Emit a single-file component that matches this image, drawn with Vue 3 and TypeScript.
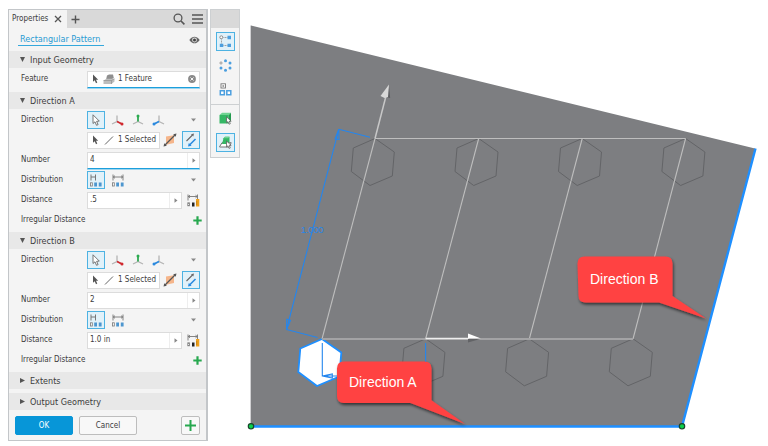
<script setup lang="ts">
import { reactive } from 'vue'

interface Direction {
  id: string
  title: string
  open: boolean
  count: string
  distance: string
  active: boolean
}

const directions = reactive<Direction[]>([
  { id: 'a', title: 'Direction A', open: true, count: '4', distance: '.5', active: true },
  { id: 'b', title: 'Direction B', open: true, count: '2', distance: '1.0 in', active: false },
])

const input = reactive({ open: true })

const closed = reactive([
  { title: 'Extents', open: false },
  { title: 'Output Geometry', open: false },
])

const axes = [
  { name: 'X axis', color: '#d0282e', x: 12, y: 10 },
  { name: 'Y axis', color: '#2bab50', x: 7, y: 1 },
  { name: 'Z axis', color: '#2a8ae0', x: 2, y: 10 },
]

const hexPoints = '0,0 19.3,13.5 17.3,37.5 -5,47 -23.7,33 -21.7,9.5'
const topColumns = [375, 478.7, 582.2, 685.6]
const bottomColumns = [322, 425.6, 529.3, 633]
</script>

<template>
  <main class="app">
    <form class="panel" @submit.prevent>
      <header class="tabs">
        <div class="tab">
          <span>Properties</span>
          <button type="button" class="plain" aria-label="Close">
            <svg width="8" height="8" viewBox="0 0 8 8"><path d="M1 1l6 6M7 1l-6 6" stroke="#555" stroke-width="1.3" /></svg>
          </button>
        </div>
        <button type="button" class="plain add-tab" aria-label="Add tab">
          <svg width="9" height="9" viewBox="0 0 9 9"><path d="M4.500 .5v8M.5 4.500h8" stroke="#555" stroke-width="1.4" /></svg>
        </button>
        <button type="button" class="plain search" aria-label="Search">
          <svg width="12" height="12" viewBox="0 0 12 12" fill="none" stroke="#555"><circle cx="5" cy="5" r="3.900" stroke-width="1.300" /><path d="M8 8l3.400 3.400" stroke-width="1.600" /></svg>
        </button>
        <button type="button" class="plain" aria-label="Menu">
          <svg width="11" height="10" viewBox="0 0 11 10"><path d="M0 1h11M0 5h11M0 9h11" stroke="#555" stroke-width="1.300" /></svg>
        </button>
      </header>

      <div class="title-row">
        <a href="#" class="title">Rectangular Pattern</a>
        <button type="button" class="plain" aria-label="Preview">
          <svg width="11" height="8" viewBox="0 0 11 8"><path d="M.3 4C2 1.500 3.700.7 5.500.7S9 1.500 10.700 4C9 6.500 7.300 7.300 5.500 7.300S2 6.500.3 4z" fill="#666" /><circle cx="5.500" cy="4" r="2.400" fill="#ddd" /><circle cx="5.500" cy="4" r="1.500" fill="#444" /></svg>
        </button>
      </div>

      <button type="button" class="section" :aria-expanded="input.open" @click="input.open = !input.open">
        <svg width="7" height="7" viewBox="0 0 7 7" :class="{ shut: !input.open }"><path d="M1 1h5L3.500 6z" fill="#555" /></svg>
        Input Geometry
      </button>
      <div v-if="input.open" class="body first">
        <div class="row">
          <span class="label">Feature</span>
          <div class="picker active">
            <svg width="7" height="10" viewBox="0 0 7 10"><path d="M1 .5v7.200l1.700-1.500 1.300 3 1.300-.6-1.300-2.800h2.200z" fill="#555" /></svg>
            <svg class="wide" width="12" height="11" viewBox="0 0 12 11"><path d="M4 1.500L6 .5h4l.8 3.500-1.800 1H3.200z" fill="#8e8e8e" /><path d="M.5 6.500l3-1.700h8v2.700L8.500 10h-8z" fill="#bdbdbd" /><path d="M.5 6.500h8V10M8.500 6.500l3-1.700" fill="none" stroke="#8a8a8a" stroke-width=".6" /></svg>
            <span>1 Feature</span>
            <button type="button" class="plain clear" aria-label="Clear feature">
              <svg width="8" height="8" viewBox="0 0 8 8"><circle cx="4" cy="4" r="3.900" fill="#8a8a8a" /><path d="M2.500 2.500l3 3M5.500 2.500l-3 3" stroke="#fff" stroke-width=".9" /></svg>
            </button>
          </div>
        </div>
      </div>

      <template v-for="d in directions" :key="d.id">
        <button type="button" class="section" :aria-expanded="d.open" @click="d.open = !d.open">
          <svg width="7" height="7" viewBox="0 0 7 7" :class="{ shut: !d.open }"><path d="M1 1h5L3.500 6z" fill="#555" /></svg>
          {{ d.title }}
        </button>
        <div v-if="d.open" class="body">
          <div class="row">
            <span class="label">Direction</span>
            <div class="tools">
              <button type="button" class="tool on" aria-label="Select">
                <svg width="8" height="12" viewBox="0 0 8 12"><path d="M1 .8v8.700l2-1.700 1.500 3.500 1.600-.7-1.500-3.300 2.700-.2z" fill="#fff" stroke="#666" stroke-width=".9" /></svg>
              </button>
              <button v-for="axis in axes" :key="axis.name" type="button" class="tool" :aria-label="axis.name">
                <svg width="14" height="12" viewBox="0 0 14 12">
                  <path d="M7 7.500V1.500M7 7.500l-5 2.500M7 7.500l5 2.500" stroke="#b4b4b4" stroke-width="1.300" />
                  <path :d="`M7 7.500L${axis.x} ${axis.y}`" :stroke="axis.color" stroke-width="1.700" />
                  <circle :cx="axis.x" :cy="axis.y + (axis.y < 5 ? 1 : 0)" r="1.500" :fill="axis.color" />
                </svg>
              </button>
              <button type="button" class="plain drop" aria-label="More directions">
                <svg width="5" height="4" viewBox="0 0 5 4"><path d="M0 .5h5L2.500 3.500z" fill="#888" /></svg>
              </button>
            </div>
          </div>
          <div class="row">
            <div class="tools shifted">
              <div class="picker short">
                <svg width="7" height="10" viewBox="0 0 7 10"><path d="M1 .5v7.200l1.700-1.500 1.300 3 1.300-.6-1.300-2.800h2.200z" fill="#555" /></svg>
                <svg class="wide" width="12" height="11" viewBox="0 0 12 11"><path d="M2 9.500L10 1.500" stroke="#666" /></svg>
                <span>1 Selected</span>
              </div>
              <button type="button" class="tool" aria-label="Midplane">
                <svg width="14" height="14" viewBox="0 0 14 14"><path d="M3 3.500l8-1.200v7.700l-8 1.800z" fill="#f5b58a" /><path d="M2 12L12 2" stroke="#555" stroke-width="1.200" /><path d="M.5 13.500l.8-3.300 2.500 2.500zM13.500.5l-.8 3.300-2.500-2.500z" fill="#555" /></svg>
              </button>
              <button type="button" class="tool on end" aria-label="Flip direction">
                <svg width="12" height="14" viewBox="0 0 12 14"><path d="M1.500 8L7.500 2" stroke="#666" stroke-width="1.100" /><path d="M9 .5L8.300 3.500 6 1.200z" fill="#666" /><path d="M4.500 12L10.500 6" stroke="#2a8ae0" stroke-width="1.600" /><path d="M3 13.500l.8-3.600 2.800 2.800z" fill="#2a8ae0" /></svg>
              </button>
            </div>
          </div>
          <div class="row">
            <label class="label" :for="`number-${d.id}`">Number</label>
            <div class="field" :class="{ active: d.active }">
              <input :id="`number-${d.id}`" v-model="d.count" type="text" />
              <button type="button" class="more" aria-label="Number options">
                <svg width="4" height="5" viewBox="0 0 4 5"><path d="M.5 .3L3.500 2.500.5 4.700z" fill="#888" /></svg>
              </button>
            </div>
          </div>
          <div class="row">
            <span class="label">Distribution</span>
            <div class="tools">
              <button type="button" class="tool on" aria-label="Incremental">
                <svg width="12" height="13" viewBox="0 0 12 13"><path d="M1 .5v6M5.500 .5v6M1 3h4.500" fill="none" stroke="#777" stroke-width="1" /><rect x=".5" y="8.800" width="1.800" height="3.200" fill="#fff" stroke="#777" stroke-width=".8" /><path d="M4.200 8.500h2.800v4h-2.800zM8.800 8.500h2.800v4h-2.800z" fill="#4d96cf" /></svg>
              </button>
              <button type="button" class="tool gap" aria-label="Fitted">
                <svg width="12" height="13" viewBox="0 0 12 13"><path d="M1 .5v6M11 .5v6M1 3h10M3 1.700L1.300 3 3 4.300M9 1.700L10.700 3 9 4.300" fill="none" stroke="#777" stroke-width=".9" /><rect x=".5" y="8.800" width="1.800" height="3.200" fill="#fff" stroke="#777" stroke-width=".8" /><path d="M4.200 8.500h2.800v4h-2.800zM8.800 8.500h2.800v4h-2.800z" fill="#4d96cf" /></svg>
              </button>
              <button type="button" class="plain drop" aria-label="More distributions">
                <svg width="5" height="4" viewBox="0 0 5 4"><path d="M0 .5h5L2.500 3.500z" fill="#888" /></svg>
              </button>
            </div>
          </div>
          <div class="row">
            <label class="label" :for="`distance-${d.id}`">Distance</label>
            <div class="tools">
              <div class="field">
                <input :id="`distance-${d.id}`" v-model="d.distance" type="text" />
                <button type="button" class="more" aria-label="Distance options">
                  <svg width="4" height="5" viewBox="0 0 4 5"><path d="M.5 .3L3.500 2.500.5 4.700z" fill="#888" /></svg>
                </button>
              </div>
              <button type="button" class="tool measure" aria-label="Measure">
                <svg width="13" height="13" viewBox="0 0 13 13"><path d="M1 .5v6M10.500 .5v6M1 2.500h9.500M3 1.200L1.300 2.500 3 3.800M8.500 1.200l1.700 1.300-1.700 1.300" fill="none" stroke="#777" stroke-width=".9" /><rect x=".8" y="8.800" width="1.700" height="3" fill="#fff" stroke="#777" stroke-width=".8" /><path d="M5 8.500h2.500v4H5z" fill="#222" /><path d="M9 5h3.300v7.500H9z" fill="#f0a21c" /><path d="M9 8h1.300M9 10h1.300" stroke="#805010" stroke-width=".6" /></svg>
              </button>
            </div>
          </div>
          <div class="row irregular">
            <span>Irregular Distance</span>
            <button type="button" class="plain" aria-label="Add irregular distance">
              <svg width="9" height="9" viewBox="0 0 9 9"><path d="M4.500 .3v8.400M.3 4.500h8.400" stroke="#27a84f" stroke-width="2.200" /></svg>
            </button>
          </div>
        </div>
      </template>

      <button v-for="s in closed" :key="s.title" type="button" class="section spaced" :aria-expanded="s.open" @click="s.open = !s.open">
        <svg width="7" height="7" viewBox="0 0 7 7" :class="{ shut: !s.open }"><path d="M1 1h5L3.500 6z" fill="#555" /></svg>
        {{ s.title }}
      </button>

      <footer class="actions">
        <button type="submit" class="action ok">OK</button>
        <button type="button" class="action">Cancel</button>
        <button type="button" class="action apply" aria-label="Apply and create new">
          <svg width="11" height="11" viewBox="0 0 11 11"><path d="M5.500 0v11M0 5.500h11" stroke="#27a84f" stroke-width="2" /></svg>
        </button>
      </footer>
    </form>

    <nav class="strip" aria-label="Pattern type">
      <div class="strip-head"></div>
      <div class="strip-group">
        <button type="button" class="kind on" aria-label="Rectangular pattern">
          <svg width="13" height="13" viewBox="0 0 13 13"><path d="M2.500 2.500h8M2.500 2.500v8M2.500 10.500h8" stroke="#999" stroke-width=".9" stroke-dasharray="2 1" fill="none" /><circle cx="2.300" cy="2.300" r="1.500" fill="#fff" stroke="#777" stroke-width=".8" /><path d="M8.500 .8h3.500v3.400H8.500zM.8 8.700h3.500v3.400H.8zM8.500 8.700h3.500v3.400H8.500z" fill="#4c9fdf" /></svg>
        </button>
        <button type="button" class="kind" aria-label="Circular pattern">
          <svg width="13" height="13" viewBox="0 0 13 13"><circle cx="2" cy="4" r="1.100" fill="#fff" stroke="#777" stroke-width=".7" /><g fill="#4c9fdf"><circle cx="6.500" cy="1.700" r="1.500" /><circle cx="11" cy="4" r="1.500" /><circle cx="11" cy="9" r="1.500" /><circle cx="6.500" cy="11.300" r="1.500" /><circle cx="2" cy="9" r="1.500" /></g></svg>
        </button>
        <button type="button" class="kind" aria-label="Sketch driven pattern">
          <svg width="13" height="13" viewBox="0 0 13 13" fill="#fff"><rect x="2" y=".8" width="4.500" height="4.200" stroke="#777" stroke-width=".9" /><path d="M4.250 2v2M3.200 3h2.100" stroke="#777" stroke-width=".7" /><path d="M1.300 7.700h4v4h-4zM7.800 7.700h4v4h-4z" stroke="#4c9fdf" stroke-width="1.500" /></svg>
        </button>
      </div>
      <div class="strip-group split">
        <button type="button" class="kind" aria-label="Pattern a solid">
          <svg width="13" height="13" viewBox="0 0 13 13"><path d="M.5 3l2.500-2.300h9L9.800 3z" fill="#6fd492" /><path d="M.5 3h9.300v8.500H.5z" fill="#35b765" /><path d="M9.800 3L12 .7v8l-2.200 2.800z" fill="#239a4e" /><path d="M7.500 4.800v6l1.500-1.200 1 2.600 1.300-.5-1-2.500h1.900z" fill="#fff" stroke="#555" stroke-width=".7" /></svg>
        </button>
        <button type="button" class="kind on" aria-label="Pattern features">
          <svg width="13" height="13" viewBox="0 0 13 13"><path d="M.6 10.700l2.400-4h9.200l-2 4.300H.6z" fill="#fff" stroke="#666" stroke-width=".9" /><path d="M4.500 2.200L6 .8h4.500v4.700L9 8H3z" fill="#35b765" /><path d="M4.500 2.200L6 .8h4.500L9.300 2.200z" fill="#6fd492" /><path d="M7.500 5v6l1.500-1.200 1 2.600 1.300-.5-1-2.500h1.900z" fill="#fff" stroke="#555" stroke-width=".7" /></svg>
        </button>
      </div>
    </nav>

    <svg class="canvas" viewBox="240 0 528 446" role="img" aria-label="Pattern preview">
      <defs>
        <filter id="shade" x="-10%" y="-10%" width="130%" height="140%">
          <feDropShadow dx="1" dy="2" stdDeviation="1.500" flood-color="#000" flood-opacity=".6" />
        </filter>
      </defs>
      <path d="M251 25.500L755 148.500 682 426.500H251z" fill="#7d7e81" />
      <path d="M250.500 25.500v400" stroke="#d0d0d2" />

      <g fill="none" stroke="#636467">
        <polygon v-for="x in topColumns" :key="x" :points="hexPoints" :transform="`translate(${x} 138.500)`" />
        <polygon v-for="x in bottomColumns.slice(1)" :key="x" :points="hexPoints" :transform="`translate(${x} 338.800)`" />
      </g>

      <polygon :points="hexPoints" transform="translate(322 339)" fill="#fff" stroke="#1e8fff" stroke-width="1.800" />

      <g stroke="#bebebe" stroke-width="1.100">
        <path d="M375 138.500H685.600" />
        <path v-for="(x, i) in topColumns" :key="x" :d="`M${x} 138.500L${bottomColumns[i]} 339`" />
      </g>
      <path d="M322 339H633" stroke="#a3a3a5" stroke-width="1.800" />

      <path d="M375 138.500L386 96" stroke="#c8c8c8" stroke-width="1.500" />
      <path d="M389 86l1.200 12-4-1z" fill="#5c5d60" />
      <path d="M389 84.500L380.500 96l4 2 3.500-1z" fill="#d8d8d8" />
      <path d="M425.600 338.500H469" stroke="#eee" stroke-width="1.600" />
      <path d="M468 338.800h13l-13 3.800z" fill="#626366" />
      <path d="M468 333.500l13 5h-13z" fill="#fff" />

      <g fill="none" stroke="#2486ee" stroke-width="1.100">
        <path d="M338.800 129.300L286.500 329.500M338.800 129.300L370 137.200M286.500 329.500L317.500 337.500" />
        <path d="M338.800 129.300L335 139l4 .5zM286.500 329.500l.3-10.300 3.700 1.200z" />
        <path d="M322.300 343v33H337M322.300 376l10-2v4zM425.600 343v20" />
      </g>
      <text class="dim" x="301" y="233">1.000</text>

      <path d="M755.500 148.500L682 426.500H251" fill="none" stroke="#1e8fff" stroke-width="2.400" />
      <circle cx="251" cy="426.300" r="2.700" fill="#0bd24a" stroke="#17452a" stroke-width="1.200" />
      <circle cx="682" cy="426.300" r="2.700" fill="#0bd24a" stroke="#17452a" stroke-width="1.200" />

      <g fill="#ff4242" filter="url(#shade)">
        <path d="M344 361.500h80.500q7 0 7 7v31.700L465 424l-54.500-21H344q-7 0-7-7v-27.500q0-7 7-7z" />
        <path d="M584.500 256.500h81q7 0 7 7V296L706 318.500 659 302.500h-73.500q-7 0-7-7l-1-32q0-7 7-7z" />
      </g>
      <text class="note" x="349" y="387">Direction A</text>
      <text class="note" x="590" y="284">Direction B</text>
    </svg>
  </main>
</template>

<style>
body {
  margin: 0;
  background: #fff;
}
</style>

<style scoped>
.app {
  display: flex;
  align-items: flex-start;
  font-family: "DejaVu Sans Condensed", "Noto Sans", sans-serif;
  font-size: 8px;
  line-height: 12px;
  color: #3c3c3c;
}

button,
input {
  font: inherit;
  color: inherit;
}

svg {
  display: block;
  flex: none;
}

.panel {
  box-sizing: border-box;
  flex: none;
  width: 200px;
  margin: 9px 0 0 8px;
  border: 1px solid #c3c6c9;
  border-right-width: 2px;
  background: #f4f4f4;
  white-space: nowrap;
}

.plain {
  display: flex;
  padding: 0;
  border: 0;
  background: none;
}

.tabs {
  display: flex;
  align-items: center;
  height: 18px;
  padding-right: 3px;
  gap: 7px;
  background: #d9d9d9;
}

.tab {
  display: flex;
  align-items: center;
  gap: 6px;
  height: 18px;
  padding: 0 5px 0 3px;
  background: #f4f4f4;
}

.add-tab {
  margin-left: -3px;
}

.search {
  margin-left: auto;
}

.title-row {
  display: flex;
  align-items: center;
  justify-content: space-between;
  height: 23px;
  padding: 0 6px 0 9px;
}

.title {
  padding: 0 4px 0 2px;
  border-bottom: 1px solid #35a8dc;
  font-size: 9px;
  color: #2a9bd3;
  text-decoration: none;
}

.section {
  display: flex;
  align-items: center;
  gap: 4px;
  width: 100%;
  height: 17px;
  padding: 0 10px;
  border: 0;
  background: #e8e8e8;
  font-size: 9px;
}

.section.spaced + .section.spaced {
  margin-top: 4px;
}

.shut {
  transform: rotate(-90deg);
}

.body {
  padding: 1px 6px 2px 12px;
}

.body.first {
  padding-bottom: 3px;
}

.row {
  display: flex;
  align-items: center;
  height: 20px;
}

.label {
  flex: none;
  width: 66px;
}

.tools {
  display: flex;
  flex: 1;
  align-items: center;
  min-width: 0;
}

.shifted {
  margin-left: 66px;
}

.picker,
.field {
  box-sizing: border-box;
  display: flex;
  flex: 1;
  align-items: center;
  min-width: 0;
  height: 17px;
  border: 1px solid #dcdcdc;
  background: #fff;
}

.picker {
  gap: 4px;
  padding: 0 3px 0 4px;
}

.picker.short {
  flex: 1;
  margin-right: 1px;
}

.picker .wide {
  margin-right: -1px;
}

.clear {
  margin-left: auto;
}

.picker.active,
.field.active {
  border-bottom-color: #1c9fdc;
  box-shadow: 0 1px #9dd5ef;
}

.field input {
  flex: 1;
  min-width: 0;
  padding: 0 0 0 2px;
  border: 0;
  outline: 0;
  background: none;
}

.more {
  display: flex;
  align-items: center;
  justify-content: center;
  width: 12px;
  height: 100%;
  padding: 0;
  border: 0;
  border-left: 1px solid #eee;
  background: none;
}

.tool {
  box-sizing: border-box;
  display: flex;
  flex: none;
  align-items: center;
  justify-content: center;
  width: 18px;
  height: 18px;
  margin-right: 3px;
  padding: 0;
  border: 0;
  background: none;
}

.tool.end,
.tool.measure {
  margin-right: 0;
}

.tool.measure {
  justify-content: flex-end;
}

.tool.gap {
  margin-left: 1px;
}

.drop {
  margin-left: auto;
  padding: 4px;
}

.irregular {
  justify-content: space-between;
  margin-right: -2px;
}

.actions {
  display: flex;
  gap: 6px;
  padding: 6px 6px 5px;
}

.action {
  box-sizing: border-box;
  display: flex;
  align-items: center;
  justify-content: center;
  width: 58px;
  height: 19px;
  padding: 0;
  border: 1px solid #bdbdbd;
  border-radius: 2px;
  background: #f8f8f8;
}

.ok {
  border-color: #0796d8;
  background: #0796d8;
  color: #fff;
}

.apply {
  width: 19px;
  margin-left: auto;
}

.strip {
  box-sizing: border-box;
  flex: none;
  width: 30px;
  margin: 9px 0 0 2px;
  border: 1px solid #cdd0d2;
  background: #f4f4f4;
}

.strip-head {
  height: 18px;
  background: #d9d9d9;
}

.strip-group {
  display: flex;
  flex-direction: column;
  align-items: center;
  gap: 5px;
  padding: 4px 0 5px;
}

.split {
  border-top: 1px solid #cdd0d2;
}

.kind {
  box-sizing: border-box;
  display: flex;
  align-items: center;
  justify-content: center;
  width: 19px;
  height: 19px;
  padding: 0;
  border: 0;
  background: none;
}

.tool.on,
.kind.on {
  border: 1px solid #4db2e2;
  background: #e1f1f9;
}

.canvas {
  flex: 1;
  min-width: 0;
}

.dim {
  font: 9px "Liberation Sans", sans-serif;
  fill: #2486ee;
}

.note {
  font: 14px "Liberation Sans", sans-serif;
  fill: #fff;
}
</style>
